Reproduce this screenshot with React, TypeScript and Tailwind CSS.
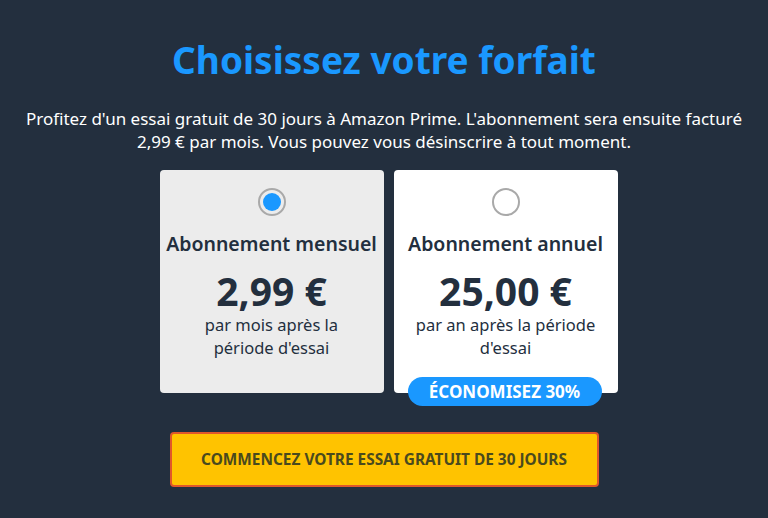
import React, { useState } from "react";

const PLANS = [
  {
    id: "mensuel",
    title: "Abonnement mensuel",
    price: "2,99 €",
    detail: ["par mois après la", "période d'essai"],
  },
  {
    id: "annuel",
    title: "Abonnement annuel",
    price: "25,00 €",
    detail: ["par an après la période", "d'essai"],
    badge: "ÉCONOMISEZ 30%",
  },
];

const App = () => {
  const [selected, setSelected] = useState("mensuel");

  return (
    <div
      className="w-full h-[518px] bg-[#232f3e] flex flex-col items-center overflow-hidden"
      style={{ fontFamily: '"Noto Sans", "Open Sans", sans-serif' }}
    >
      <h1 className="mt-[36px] text-[37px] leading-[48px] font-bold text-[#1a98ff]">
        Choisissez votre forfait
      </h1>

      <p className="mt-[23px] text-[17px] leading-[23px] text-white text-center">
        Profitez d'un essai gratuit de 30 jours à Amazon Prime. L'abonnement sera ensuite facturé
        <br />
        2,99 € par mois. Vous pouvez vous désinscrire à tout moment.
      </p>

      <div className="mt-[17px] ml-[9px] flex gap-[10px]">
        {PLANS.map((plan) => {
          const active = selected === plan.id;
          return (
            <button
              key={plan.id}
              onClick={() => setSelected(plan.id)}
              className={`relative w-[224px] h-[223px] rounded-[4px] flex flex-col items-center pt-[18px] text-[#232f3e] ${
                active ? "bg-[#ececec]" : "bg-white"
              }`}
            >
              {/* radio */}
              <span className="w-[28px] h-[28px] rounded-full border-2 border-[#a9a9a9] flex items-center justify-center">
                {active ? (
                  <span className="w-[18px] h-[18px] rounded-full bg-[#1a98ff]" />
                ) : null}
              </span>

              <span className="mt-[15px] text-[19.5px] leading-[26px] font-semibold whitespace-nowrap">
                {plan.title}
              </span>
              <span className="mt-[13px] text-[39px] leading-[42px] font-bold">
                {plan.price}
              </span>
              <span className="mt-[1px] text-[16.5px] leading-[23px] text-center">
                {plan.detail[0]}
                <br />
                {plan.detail[1]}
              </span>

              {plan.badge ? (
                <span className="absolute left-[14px] top-[207px] w-[194px] h-[29px] rounded-full bg-[#1a98ff] text-white text-[17px] leading-[29px] font-bold">
                  {plan.badge}
                </span>
              ) : null}
            </button>
          );
        })}
      </div>

      <button className="mt-[39px] w-[429px] h-[55px] rounded-[4px] bg-[#ffc300] border-2 border-[#e0572a] text-[#4a4a1e] text-[15.4px] font-bold">
        COMMENCEZ VOTRE ESSAI GRATUIT DE 30 JOURS
      </button>
    </div>
  );
};

export default App;
